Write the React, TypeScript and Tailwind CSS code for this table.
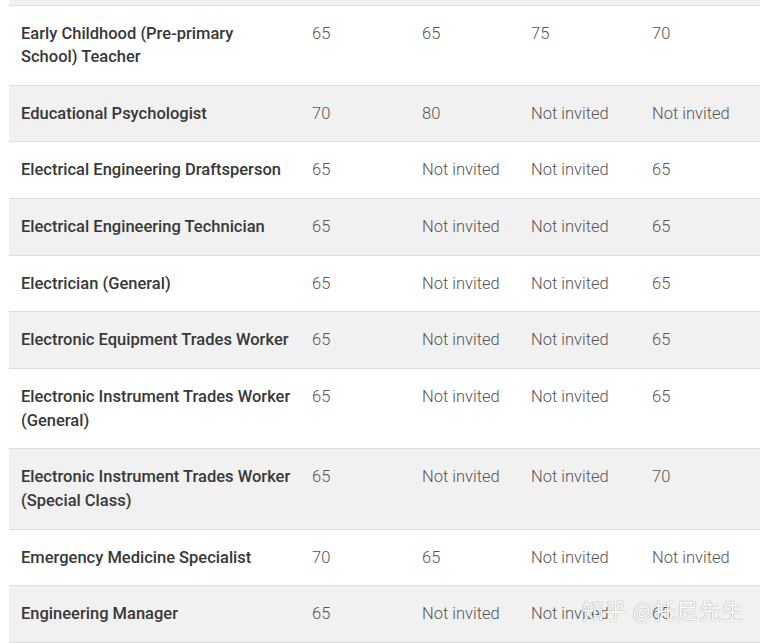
const rows: [string, string, string, string, string][] = [
  ['Early Childhood (Pre-primary School) Teacher', '65', '65', '75', '70'],
  ['Educational Psychologist', '70', '80', 'Not invited', 'Not invited'],
  ['Electrical Engineering Draftsperson', '65', 'Not invited', 'Not invited', '65'],
  ['Electrical Engineering Technician', '65', 'Not invited', 'Not invited', '65'],
  ['Electrician (General)', '65', 'Not invited', 'Not invited', '65'],
  ['Electronic Equipment Trades Worker', '65', 'Not invited', 'Not invited', '65'],
  ['Electronic Instrument Trades Worker (General)', '65', 'Not invited', 'Not invited', '65'],
  ['Electronic Instrument Trades Worker (Special Class)', '65', 'Not invited', 'Not invited', '70'],
  ['Emergency Medicine Specialist', '70', '65', 'Not invited', 'Not invited'],
  ['Engineering Manager', '65', 'Not invited', 'Not invited', '65'],
];

export default function App() {
  return (
    <div className="relative w-[765px] h-[643px] overflow-hidden bg-white font-['Roboto',sans-serif] text-[16.5px] leading-[23.65px]">
      <table className="ml-[9px] w-[751px] table-fixed border-collapse">
        <colgroup>
          <col className="w-[291px]" />
          <col className="w-[110px]" />
          <col className="w-[109px]" />
          <col className="w-[121px]" />
          <col className="w-[120px]" />
        </colgroup>
        <tbody>
          <tr className="bg-[#f1f1f1] border-b border-[#dedede]">
            <td colSpan={5} className="h-[5px] p-0" />
          </tr>
          {rows.map((r, i) => (
            <tr key={i} className={`${i % 2 === 1 ? 'bg-[#f1f1f1]' : 'bg-white'} border-b border-[#dedede]`}>
              <td className="align-top pl-[12px] pr-[8px] py-4 font-medium text-[#383838]">{r[0]}</td>
              {r.slice(1).map((v, j) => (
                <td key={j} className="align-top pl-[12px] pr-1 py-4 font-light text-[#555]">{v}</td>
              ))}
            </tr>
          ))}
        </tbody>
      </table>
      <div className="absolute left-[582px] top-[595px] text-[22px] leading-[28px] text-white tracking-[0.5px] [text-shadow:0_0_1px_rgba(0,0,0,0.55)] font-['Noto_Sans_CJK_SC',sans-serif]">
        知乎 @托尼先生
      </div>
    </div>
  );
}
